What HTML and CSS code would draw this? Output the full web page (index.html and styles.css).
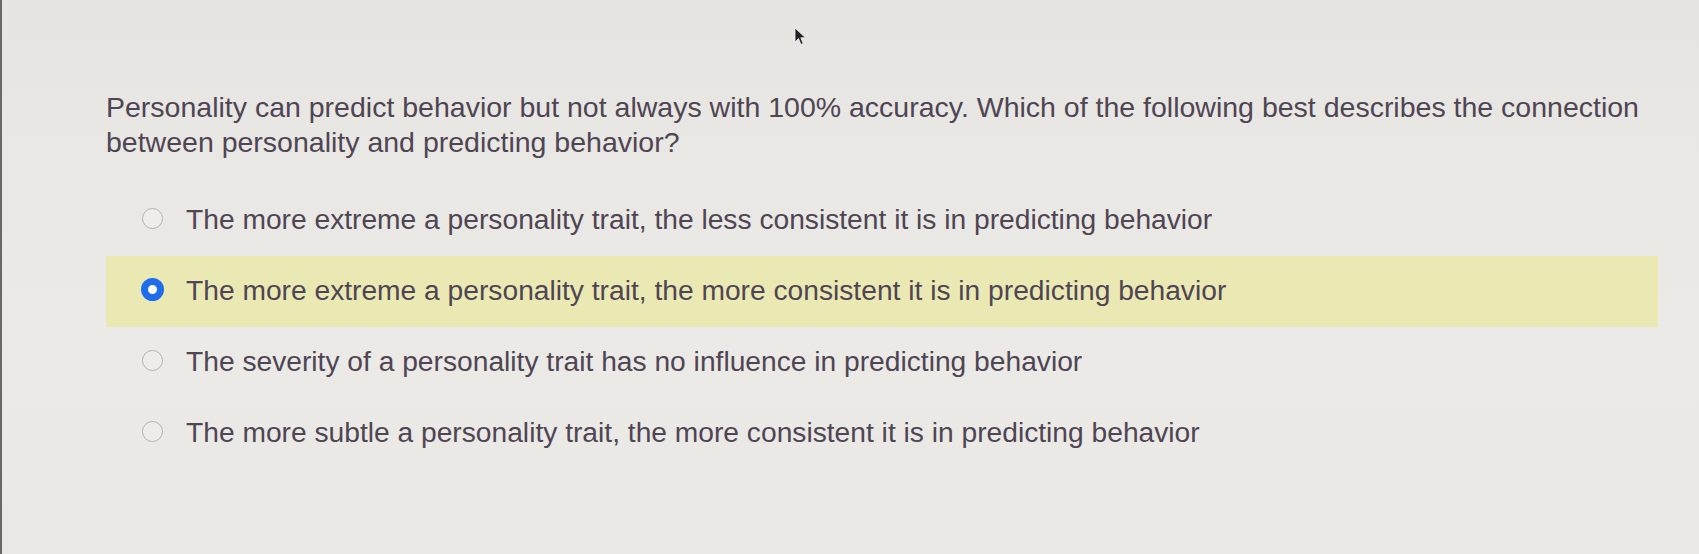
FILE: index.html
```html
<!DOCTYPE html>
<html>
<head>
<meta charset="utf-8">
<link rel="stylesheet" href="styles.css">
</head>
<body>
<div class="page">
  <svg class="cursor" width="14" height="20" viewBox="0 0 14 20"><path d="M1 1 L1 15 L4.5 11.5 L7 17.5 L9.2 16.5 L6.8 10.8 L11.5 10.8 Z" fill="#222" stroke="#f4f4f4" stroke-width="0.8"/></svg>
  <div class="question">Personality can predict behavior but not always with 100% accuracy. Which of the following best describes the connection between personality and predicting behavior?</div>
  <div class="options">
    <div class="option"><span class="radio"></span><span class="label">The more extreme a personality trait, the less consistent it is in predicting behavior</span></div>
    <div class="option selected"><span class="radio checked"></span><span class="label">The more extreme a personality trait, the more consistent it is in predicting behavior</span></div>
    <div class="option"><span class="radio"></span><span class="label">The severity of a personality trait has no influence in predicting behavior</span></div>
    <div class="option"><span class="radio"></span><span class="label">The more subtle a personality trait, the more consistent it is in predicting behavior</span></div>
  </div>
</div>
</body>
</html>
```

FILE: styles.css
```css
html, body {
  margin: 0;
  padding: 0;
  background: #e8e7e4;
}
.page {
  position: relative;
  width: 1699px;
  height: 554px;
  box-sizing: border-box;
  padding: 90px 41px 0 104px;
  border-left: 2px solid #6a6866;
  font-family: "Liberation Sans", Arial, sans-serif;
  color: #4f4553;
  background: linear-gradient(180deg, #e6e5e2 0%, #ebeae7 60%, #e9e8e5 100%);
}
.cursor {
  position: absolute;
  left: 792px;
  top: 27px;
}
.question {
  font-size: 28.5px;
  line-height: 35px;
  width: 1554px;
}
.options {
  margin-top: 25px;
  display: flex;
  flex-direction: column;
}
.option {
  height: 71px;
  box-sizing: border-box;
  padding-bottom: 4px;
  display: flex;
  align-items: center;
  padding-left: 36px;
  font-size: 28.2px;
  line-height: 36px;
}
.option.selected {
  background: #ebe9b3;
}
.radio {
  width: 21px;
  height: 21px;
  border-radius: 50%;
  border: 1.6px solid #b5b2b0;
  background: #eeedea;
  box-sizing: border-box;
  flex: none;
  margin-right: 23px;
}
.radio.checked {
  width: 23px;
  height: 23px;
  border: 7px solid #1d6ded;
  background: #ffffff;
  margin-left: -1px;
  margin-right: 22px;
}
.label {
  white-space: nowrap;
}
```
